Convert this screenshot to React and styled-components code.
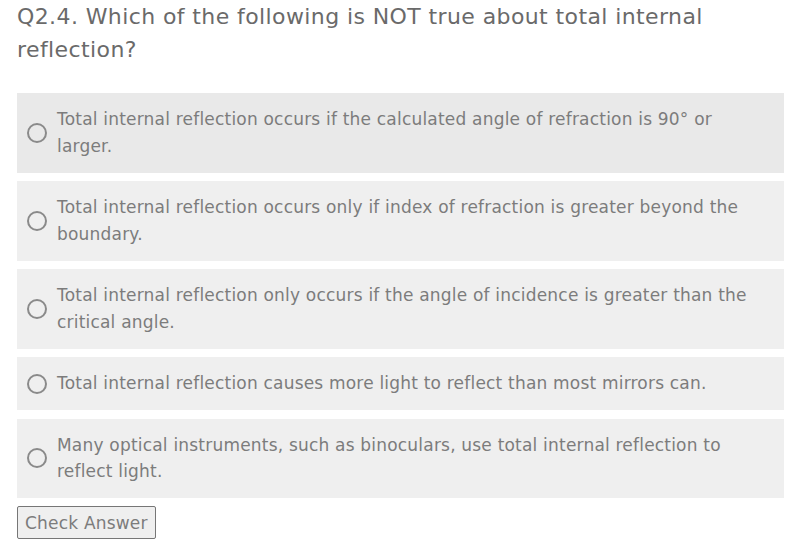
import React from "react";
import styled, { createGlobalStyle } from "styled-components";

const GlobalStyle = createGlobalStyle`
  html, body { margin: 0; padding: 0; background: #ffffff; }
  body { font-family: "DejaVu Sans", "Noto Sans", sans-serif; }
`;

const Page = styled.div`
  padding: 0 1px 0 17px;
  width: 767px;
`;

const Title = styled.h2`
  margin: 0;
  font-weight: 400;
  font-size: 22px;
  letter-spacing: 0.4px;
  line-height: 33px;
  color: #6a6a6a;
`;

const OptionList = styled.div`
  margin-top: 27px;
  display: flex;
  flex-direction: column;
  gap: 8.5px;
`;

const Option = styled.label`
  display: flex;
  align-items: center;
  gap: 10px;
  padding: 13.25px 20px 13.25px 10px;
  background: ${(p) => (p.$hover ? "#e9e9e9" : "#efefef")};
  cursor: pointer;
`;

const Radio = styled.span`
  flex: none;
  width: 16px;
  height: 16px;
  border: 2px solid #8a8a8a;
  border-radius: 50%;
  background: transparent;
`;

const OptionText = styled.span`
  font-size: 17px;
  font-weight: 400;
  letter-spacing: 0.2px;
  line-height: 26.5px;
  color: #7c7c7c;
`;

const CheckButton = styled.button`
  margin-top: 8px;
  height: 33px;
  padding: 0 7px;
  font-family: "DejaVu Sans", "Noto Sans", sans-serif;
  font-size: 17px;
  font-weight: 400;
  letter-spacing: 0.2px;
  color: #7c7c7c;
  background: #efefef;
  border: 1px solid #767676;
  border-radius: 2px;
`;

const options = [
  "Total internal reflection occurs if the calculated angle of refraction is 90° or larger.",
  "Total internal reflection occurs only if index of refraction is greater beyond the boundary.",
  "Total internal reflection only occurs if the angle of incidence is greater than the critical angle.",
  "Total internal reflection causes more light to reflect than most mirrors can.",
  "Many optical instruments, such as binoculars, use total internal reflection to reflect light.",
];

export default function App() {
  return (
    <Page>
      <GlobalStyle />
      <Title>Q2.4. Which of the following is NOT true about total internal reflection?</Title>
      <OptionList>
        {options.map((t, i) => (
          <Option key={i} $hover={i === 0}>
            <Radio />
            <OptionText>{t}</OptionText>
          </Option>
        ))}
      </OptionList>
      <CheckButton>Check Answer</CheckButton>
    </Page>
  );
}
